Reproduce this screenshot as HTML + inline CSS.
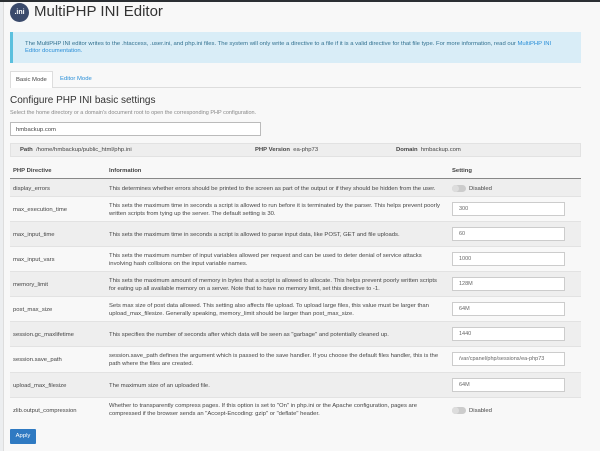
<!DOCTYPE html>
<html><head><style>
*{box-sizing:border-box;margin:0;padding:0}
body{width:600px;height:451px;overflow:hidden;background:#f8f8f8;font-family:"Liberation Sans",sans-serif;color:#444;position:relative}
.a{position:absolute}
.t{font-size:5.9px;line-height:8px;white-space:nowrap}
.row{position:absolute;left:10px;width:571px;border-bottom:1px solid #e2e2e2}
.inp{position:absolute;left:442px;width:113px;height:14px;background:#fff;border:1px solid #ccc;font-size:5.5px;padding-left:6px;line-height:12px;color:#666}
.tog{position:absolute;left:442px;width:14px;height:7px;border-radius:4px;background:#ccc}
.tog::after{content:"";position:absolute;left:0;top:0;width:7px;height:7px;border-radius:50%;background:#ddd}
</style></head><body>
<div class="a" style="left:0;top:0;width:600px;height:2px;background:#2b2f33"></div>
<div class="a" style="left:0;top:2px;width:4px;height:449px;background:#eceef0;border-right:1px solid #ddd"></div>
<div class="a" style="left:10px;top:3px;width:19px;height:19px;border-radius:50%;background:#3a4a6b;color:#fff;font-size:7px;font-weight:bold;text-align:center;line-height:19px">.ini</div>
<div class="a" style="left:34px;top:3px;font-size:15px;color:#333">MultiPHP INI Editor</div>
<div class="a" style="left:10px;top:32px;width:571px;height:31px;background:#d9edf7;border-left:3px solid #5bc0de"></div>
<div class="a t" style="left:25px;top:40px;font-size:5.9px;color:#31708f">The MultiPHP INI editor writes to the .htaccess, .user.ini, and php.ini files. The system will only write a directive to a file if it is a valid directive for that file type. For more information, read our <span style="color:#2a8fd8">MultiPHP INI</span></div>
<div class="a t" style="left:25px;top:47px;color:#2a8fd8">Editor documentation.</div>
<div class="a" style="left:10px;top:87px;width:571px;height:1px;background:#ddd"></div>
<div class="a t" style="left:10px;top:71px;width:43px;height:17px;background:#fff;border:1px solid #ddd;border-bottom:none;padding:4px 0 0 5px">Basic Mode</div>
<div class="a t" style="left:60px;top:75px;color:#2a8fd8">Editor Mode</div>
<div class="a" style="left:10px;top:95px;font-size:10px;color:#333">Configure PHP INI basic settings</div>
<div class="a t" style="left:10px;top:109px;color:#888;font-size:5.5px">Select the home directory or a domain's document root to open the corresponding PHP configuration.</div>
<div class="a t" style="left:10px;top:122px;width:251px;height:14px;background:#fff;border:1px solid #bbb;padding:3px 0 0 5px">hmbackup.com</div>
<div class="a" style="left:10px;top:143px;width:571px;height:14px;background:#eee;border:1px solid #e2e2e2"></div>
<div class="a t" style="left:20px;top:146px"><b>Path</b>&nbsp; /home/hmbackup/public_html/php.ini</div>
<div class="a t" style="left:255px;top:146px"><b>PHP Version</b>&nbsp; ea-php73</div>
<div class="a t" style="left:396px;top:146px"><b>Domain</b>&nbsp; hmbackup.com</div>
<div class="a" style="left:10px;top:178px;width:571px;height:1px;background:#888"></div>
<div class="a t" style="left:13px;top:167px;font-weight:bold">PHP Directive</div>
<div class="a t" style="left:109px;top:167px;font-weight:bold">Information</div>
<div class="a t" style="left:452px;top:167px;font-weight:bold">Setting</div>

<div class="row" style="top:179px;height:18px;background:#eee"><div class="a t" style="left:3px;top:6px">display_errors</div><div class="a t" style="left:99px;top:6px">This determines whether errors should be printed to the screen as part of the output or if they should be hidden from the user.</div><div class="tog" style="top:6px"></div><div class="a t" style="left:459px;top:6px">Disabled</div></div>
<div class="row" style="top:197px;height:25px;background:#f8f8f8"><div class="a t" style="left:3px;top:9px">max_execution_time</div><div class="a t" style="left:99px;top:5px">This sets the maximum time in seconds a script is allowed to run before it is terminated by the parser. This helps prevent poorly<br>written scripts from tying up the server. The default setting is 30.</div><div class="inp" style="top:5px">300</div></div>
<div class="row" style="top:222px;height:25px;background:#eee"><div class="a t" style="left:3px;top:9px">max_input_time</div><div class="a t" style="left:99px;top:9px">This sets the maximum time in seconds a script is allowed to parse input data, like POST, GET and file uploads.</div><div class="inp" style="top:5px">60</div></div>
<div class="row" style="top:247px;height:25px;background:#f8f8f8"><div class="a t" style="left:3px;top:9px">max_input_vars</div><div class="a t" style="left:99px;top:5px">This sets the maximum number of input variables allowed per request and can be used to deter denial of service attacks<br>involving hash collisions on the input variable names.</div><div class="inp" style="top:5px">1000</div></div>
<div class="row" style="top:272px;height:25px;background:#eee"><div class="a t" style="left:3px;top:9px">memory_limit</div><div class="a t" style="left:99px;top:5px">This sets the maximum amount of memory in bytes that a script is allowed to allocate. This helps prevent poorly written scripts<br>for eating up all available memory on a server. Note that to have no memory limit, set this directive to -1.</div><div class="inp" style="top:5px">128M</div></div>
<div class="row" style="top:297px;height:25px;background:#f8f8f8"><div class="a t" style="left:3px;top:9px">post_max_size</div><div class="a t" style="left:99px;top:5px">Sets max size of post data allowed. This setting also affects file upload. To upload large files, this value must be larger than<br>upload_max_filesize. Generally speaking, memory_limit should be larger than post_max_size.</div><div class="inp" style="top:5px">64M</div></div>
<div class="row" style="top:322px;height:25px;background:#eee"><div class="a t" style="left:3px;top:9px">session.gc_maxlifetime</div><div class="a t" style="left:99px;top:9px">This specifies the number of seconds after which data will be seen as "garbage" and potentially cleaned up.</div><div class="inp" style="top:5px">1440</div></div>
<div class="row" style="top:347px;height:26px;background:#f8f8f8"><div class="a t" style="left:3px;top:9px">session.save_path</div><div class="a t" style="left:99px;top:5px">session.save_path defines the argument which is passed to the save handler. If you choose the default files handler, this is the<br>path where the files are created.</div><div class="inp" style="top:5px">/var/cpanel/php/sessions/ea-php73</div></div>
<div class="row" style="top:373px;height:25px;background:#eee"><div class="a t" style="left:3px;top:9px">upload_max_filesize</div><div class="a t" style="left:99px;top:9px">The maximum size of an uploaded file.</div><div class="inp" style="top:5px">64M</div></div>
<div class="row" style="top:398px;height:23px;background:#f8f8f8;border:none"><div class="a t" style="left:3px;top:9px">zlib.output_compression</div><div class="a t" style="left:99px;top:4px">Whether to transparently compress pages. If this option is set to "On" in php.ini or the Apache configuration, pages are<br>compressed if the browser sends an "Accept-Encoding: gzip" or "deflate" header.</div><div class="tog" style="top:9px"></div><div class="a t" style="left:459px;top:9px">Disabled</div></div>
<div class="a t" style="left:10px;top:429px;width:26px;height:15px;background:#2f7ac2;color:#fff;text-align:center;line-height:15px;border-radius:1px">Apply</div>
</body></html>
